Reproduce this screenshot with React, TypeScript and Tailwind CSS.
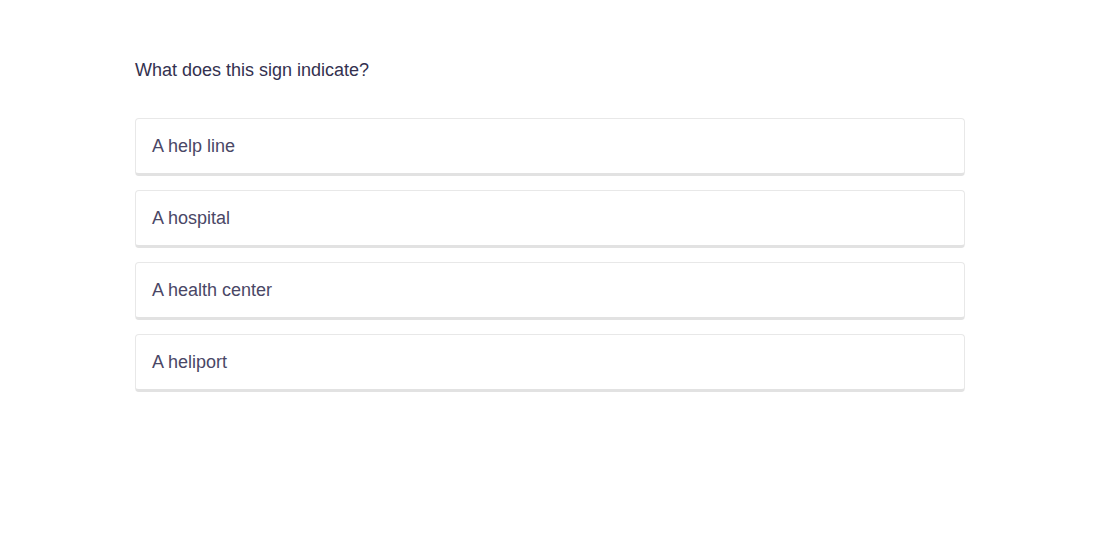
const options = ["A help line", "A hospital", "A health center", "A heliport"];

export default function App() {
  return (
    <div className="min-h-[550px] bg-white font-['Liberation_Sans',Arial,sans-serif]">
      <div className="mx-auto w-[830px] pt-[56px]">
        {/* Question */}
        <p className="text-[18px] leading-[28px] text-[#34314f]">What does this sign indicate?</p>

        {/* Answer options */}
        <div className="mt-[34px] flex flex-col gap-[14px]">
          {options.map((opt) => (
            <button
              key={opt}
              className="w-full rounded-[4px] border border-b-[3px] border-[#e8e8e8] border-b-[#e2e2e2] bg-white px-4 py-[13px] text-left text-[18px] leading-[28px] text-[#4a4766]"
            >
              {opt}
            </button>
          ))}
        </div>
      </div>
    </div>
  );
}
